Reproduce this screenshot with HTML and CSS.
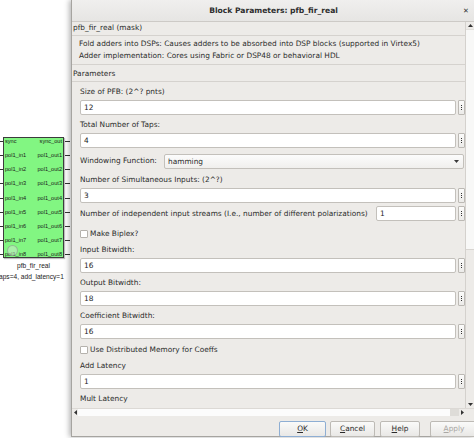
FILE: index.html
```html
<!DOCTYPE html>
<html>
<head>
<meta charset="utf-8">
<link rel="stylesheet" href="styles.css">
</head>
<body>
<div class="canvas">
  <div class="block">
    <div class="port"><span>sync</span><span>sync_out</span></div>
    <div class="port"><span>pol1_in1</span><span>pol1_out1</span></div>
    <div class="port"><span>pol1_in2</span><span>pol1_out2</span></div>
    <div class="port"><span>pol1_in3</span><span>pol1_out3</span></div>
    <div class="port"><span>pol1_in4</span><span>pol1_out4</span></div>
    <div class="port"><span>pol1_in5</span><span>pol1_out5</span></div>
    <div class="port"><span>pol1_in6</span><span>pol1_out6</span></div>
    <div class="port"><span>pol1_in7</span><span>pol1_out7</span></div>
    <div class="port"><span>pol1_in8</span><span>pol1_out8</span></div>
    <div class="mask-icon"></div>
  </div>
  <div class="block-name">pfb_fir_real</div>
  <div class="block-params">aps=4, add_latency=1</div>
</div>

<div class="dialog">
  <div class="titlebar">
    <span></span>
    <span class="title">Block Parameters: pfb_fir_real</span>
    <span class="close">&#x2715;</span>
  </div>
  <div class="main">
    <div class="viewport">
      <div class="mask-name">pfb_fir_real (mask)</div>
      <div class="desc">
        <div>Fold adders into DSPs: Causes adders to be absorbed into DSP blocks (supported in Virtex5)</div>
        <div>Adder implementation: Cores using Fabric or DSP48 or behavioral HDL</div>
      </div>
      <div class="section">Parameters</div>
      <div class="params">
        <div class="field">
          <div class="label">Size of PFB: (2^? pnts)</div>
          <div class="entry"><div class="input">12</div><div class="spin"><i></i><i></i><i></i></div></div>
        </div>
        <div class="field">
          <div class="label">Total Number of Taps:</div>
          <div class="entry"><div class="input">4</div><div class="spin"><i></i><i></i><i></i></div></div>
        </div>
        <div class="combo-row">
          <div class="label">Windowing Function:</div>
          <div class="combo"><span>hamming</span><svg class="combo-arrow" width="5" height="3" viewBox="0 0 5 3"><polygon points="0,0 5,0 2.5,3" fill="#3a3a3a"/></svg></div>
        </div>
        <div class="field">
          <div class="label">Number of Simultaneous Inputs: (2^?)</div>
          <div class="entry"><div class="input">3</div><div class="spin"><i></i><i></i><i></i></div></div>
        </div>
        <div class="inline-row">
          <div class="label inline-label">Number of independent input streams (I.e., number of different polarizations)</div>
          <div class="input short">1</div>
          <div class="spin"><i></i><i></i><i></i></div>
        </div>
        <div class="check-row first-check"><span class="checkbox"></span><span>Make Biplex?</span></div>
        <div class="field">
          <div class="label">Input Bitwidth:</div>
          <div class="entry"><div class="input">16</div><div class="spin"><i></i><i></i><i></i></div></div>
        </div>
        <div class="field">
          <div class="label">Output Bitwidth:</div>
          <div class="entry"><div class="input">18</div><div class="spin"><i></i><i></i><i></i></div></div>
        </div>
        <div class="field">
          <div class="label">Coefficient Bitwidth:</div>
          <div class="entry"><div class="input">16</div><div class="spin"><i></i><i></i><i></i></div></div>
        </div>
        <div class="check-row"><span class="checkbox"></span><span>Use Distributed Memory for Coeffs</span></div>
        <div class="field">
          <div class="label">Add Latency</div>
          <div class="entry"><div class="input">1</div><div class="spin"><i></i><i></i><i></i></div></div>
        </div>
        <div class="field">
          <div class="label">Mult Latency</div>
        </div>
      </div>
    </div>
    <div class="vscroll">
      <div class="arrow"><svg width="5" height="3" viewBox="0 0 5 3"><polygon points="0,3 5,3 2.5,0" fill="#333"/></svg></div>
      <div class="vthumb"></div>
      <div class="vtrack"></div>
      <div class="arrow"><svg width="5" height="3" viewBox="0 0 5 3"><polygon points="0,0 5,0 2.5,3" fill="#333"/></svg></div>
    </div>
  </div>
  <div class="hscroll">
    <div class="harrow"><svg width="3" height="5" viewBox="0 0 3 5"><polygon points="3,0 3,5 0,2.5" fill="#333"/></svg></div>
    <div class="hthumb"></div>
    <div class="htrack"></div>
    <div class="harrow"><svg width="3" height="5" viewBox="0 0 3 5"><polygon points="0,0 0,5 3,2.5" fill="#333"/></svg></div>
    <div class="hcorner"></div>
  </div>
  <div class="buttons">
    <div class="btn btn-ok"><u>O</u>K</div>
    <div class="btn btn-cancel"><u>C</u>ancel</div>
    <div class="btn btn-help"><u>H</u>elp</div>
    <div class="btn btn-apply"><u>A</u>pply</div>
  </div>
</div>
</body>
</html>
```

FILE: styles.css
```css
html, body {
  margin: 0;
  padding: 0;
}
body {
  width: 474px;
  height: 438px;
  overflow: hidden;
  background: #ffffff;
  position: relative;
  font-family: "DejaVu Sans", sans-serif;
  color: #2b2b2b;
}

/* ---------- Simulink canvas ---------- */
.canvas {
  position: absolute;
  left: 0;
  top: 0;
  width: 80px;
  height: 438px;
}
.block {
  position: absolute;
  left: 3px;
  top: 137px;
  width: 59px;
  height: 119px;
  border: 1px solid #3c3c3c;
  background: #82f682;
  display: flex;
  flex-direction: column;
  justify-content: space-between;
  font-family: "Liberation Sans", Arial, sans-serif;
  font-size: 5.6px;
  color: #1a1a1a;
  box-shadow: 1px 1px 1px rgba(0,0,0,0.25);
}
.port {
  position: relative;
  height: 6px;
  line-height: 6px;
  display: flex;
  justify-content: space-between;
  padding: 0 1px 0 1px;
  white-space: nowrap;
}
.port::before {
  content: "";
  position: absolute;
  left: -4px;
  top: 3px;
  width: 3px;
  height: 1px;
  background: #333;
}
.port::after {
  content: "";
  position: absolute;
  right: -7px;
  top: 3px;
  width: 5px;
  height: 1px;
  background: #333;
}
.mask-icon {
  position: absolute;
  left: 3px;
  bottom: 1px;
  width: 9px;
  height: 9px;
  border-radius: 50%;
  border: 1px solid rgba(120,120,120,0.45);
  background: rgba(220,230,220,0.45);
}
.block-name {
  position: absolute;
  left: 0;
  top: 262px;
  width: 67px;
  text-align: center;
  font-family: "Liberation Sans", Arial, sans-serif;
  font-size: 6.6px;
  color: #222;
}
.block-params {
  position: absolute;
  left: -1px;
  top: 273px;
  white-space: nowrap;
  font-family: "Liberation Sans", Arial, sans-serif;
  font-size: 6.6px;
  color: #222;
}

/* ---------- Dialog window ---------- */
.dialog {
  position: absolute;
  left: 71px;
  top: 0;
  width: 404px;
  height: 437px;
  box-sizing: border-box;
  background: #edebe8;
  border-left: 1px solid #a6a4a0;
  border-bottom: 1px solid #a6a4a0;
  box-shadow: -2px 0 5px rgba(0,0,0,0.28);
  display: flex;
  flex-direction: column;
  font-size: 7.4px;
  z-index: 2;
}
.titlebar {
  height: 21px;
  border-bottom: 1px solid #cdcac6;
  background: linear-gradient(#f0efee, #e6e5e3);
  display: grid;
  grid-template-columns: 1fr auto 1fr;
  align-items: center;
  flex-shrink: 0;
}
.title {
  font-weight: bold;
  font-size: 7.6px;
  color: #2e2e2e;
}
.close {
  justify-self: end;
  width: 18px;
  text-align: center;
  font-size: 7px;
  font-weight: bold;
  color: #333;
}
.main {
  height: 386px;
  display: flex;
  flex-shrink: 0;
}
.viewport {
  width: 393px;
  overflow: hidden;
}
.mask-name {
  height: 13px;
  line-height: 12px;
  padding-left: 1px;
  border-bottom: 1px solid #d5d2ce;
}
.desc {
  height: 29px;
  box-sizing: border-box;
  padding: 2px 0 0 7px;
  line-height: 12px;
  border-bottom: 1px solid #d5d2ce;
  white-space: nowrap;
}
.section {
  height: 16px;
  line-height: 17px;
  padding-left: 1px;
  border-bottom: 1px solid #d5d2ce;
}
.params {
  padding: 2px 0 0 8px;
}
.field {
  margin-bottom: 2px;
}
.label {
  height: 16px;
  line-height: 16px;
  white-space: nowrap;
}
.entry {
  display: flex;
  height: 15px;
}
.input {
  width: 376px;
  height: 15px;
  box-sizing: border-box;
  background: #ffffff;
  border: 1px solid #c3c0bb;
  border-radius: 2px;
  padding-left: 3px;
  line-height: 13px;
  color: #222;
}
.input.short {
  width: 80px;
}
.spin {
  width: 7px;
  height: 15px;
  box-sizing: border-box;
  margin-left: 2px;
  border: 1px solid #bcb9b4;
  border-radius: 1px;
  background: linear-gradient(#fbfbfa, #ecebe9);
  display: flex;
  flex-direction: column;
  align-items: center;
  justify-content: center;
  gap: 1px;
}
.spin i {
  display: block;
  width: 1px;
  height: 1px;
  background: #333;
}
.combo-row {
  height: 22px;
  display: flex;
  align-items: center;
}
.combo-row .label {
  width: 84px;
}
.combo {
  width: 300px;
  height: 15px;
  box-sizing: border-box;
  border: 1px solid #c3c0bb;
  border-radius: 2px;
  background: linear-gradient(#fcfcfc, #f0efed);
  display: flex;
  align-items: center;
  justify-content: space-between;
  padding: 0 4px 0 3px;
}
.inline-row {
  height: 17px;
  display: flex;
  align-items: center;
}
.inline-label {
  width: 296px;
}
.check-row {
  height: 17px;
  display: flex;
  align-items: center;
  gap: 2px;
}
.first-check {
  margin-top: 3px;
}
.checkbox {
  width: 8px;
  height: 8px;
  box-sizing: border-box;
  background: #fff;
  border: 1px solid #b5b2ad;
  border-radius: 1px;
}

/* scrollbars */
.vscroll {
  width: 9px;
  border-left: 1px solid #d4d1cd;
  display: flex;
  flex-direction: column;
}
.arrow {
  height: 7px;
  display: flex;
  align-items: center;
  justify-content: center;
}
.vthumb {
  height: 219px;
  background: #f8f8f7;
  border-top: 1px solid #e2e0dc;
  border-bottom: 1px solid #d8d5d1;
}
.vtrack {
  flex: 1;
}
.hscroll {
  height: 7px;
  display: flex;
  flex-shrink: 0;
  border-top: 1px solid #dcd9d5;
}
.harrow {
  width: 6px;
  display: flex;
  align-items: center;
  justify-content: center;
}
.hthumb {
  width: 372px;
  background: #fcfcfc;
}
.htrack {
  width: 9px;
  background: #dedcd8;
}
.hcorner {
  flex: 1;
}

/* buttons */
.buttons {
  flex: 1;
  display: flex;
  padding: 5px 0 0 207px;
  gap: 4px;
}
.btn {
  height: 16px;
  box-sizing: border-box;
  border: 1px solid #bdbab5;
  border-radius: 2px;
  background: linear-gradient(#fafaf9, #e9e8e6);
  text-align: center;
  line-height: 14px;
  color: #2b2b2b;
  flex-shrink: 0;
}
.btn-ok {
  width: 47px;
  border-color: #8eaed3;
}
.btn-cancel {
  width: 45px;
}
.btn-help {
  width: 40px;
  margin-left: 1px;
}
.btn-apply {
  width: 48px;
  margin-left: 6px;
  color: #a9a7a3;
}
```
